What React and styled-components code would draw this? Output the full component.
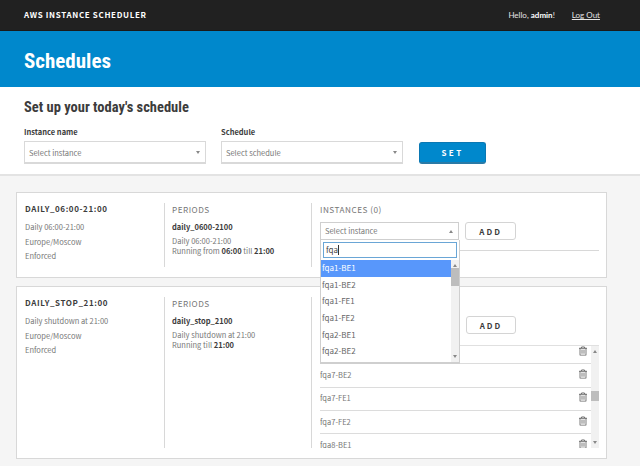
import styled, { createGlobalStyle } from 'styled-components';
import { FaRegTrashAlt } from 'react-icons/fa';

const SANS = '"Noto Sans CJK SC", "Noto Sans", sans-serif';

const GlobalStyle = createGlobalStyle`
  html, body {
    margin: 0;
    height: 466px;
    overflow: hidden;
    background: #f5f5f5;
    font-family: ${SANS};
    color: #666;
  }
  * { box-sizing: border-box; }
`;

const TopBar = styled.header`
  height: 31px;
  background: #212121;
  border-bottom: 1px solid #1a1a1a;
  padding: 0 40px 0 24px;
  display: flex;
  align-items: center;
  justify-content: space-between;
  color: #fff;
`;

const Brand = styled.div`
  font-size: 8px;
  line-height: 12px;
  font-weight: 700;
  letter-spacing: 0.65px;
`;

const UserBox = styled.div`
  display: flex;
  gap: 17px;
  font-family: Lato, sans-serif;
  font-size: 8px;
  line-height: 12px;
  color: #e4e4e4;
  b { color: #fff; }
  a { color: #e4e4e4; text-decoration: underline; }
`;

const Banner = styled.div`
  height: 56px;
  background: #0088cc;
  padding: 3px 0 0 24px;
  display: flex;
  align-items: center;
`;

const PageTitle = styled.h1`
  margin: 0;
  font-family: Roboto, sans-serif;
  font-stretch: 75%;
  font-size: 21px;
  line-height: 28px;
  font-weight: 700;
  color: #fff;
`;

const SetupForm = styled.section`
  height: 89px;
  background: #fff;
  border-bottom: 2px solid #e3e3e3;
  padding: 11px 0 0 24px;
`;

const FormTitle = styled.h2`
  margin: 0 0 8px;
  font-family: Roboto, sans-serif;
  font-stretch: 75%;
  font-size: 14.5px;
  line-height: 20px;
  font-weight: 700;
  color: #3c3c3c;
`;

const FormRow = styled.div`
  display: flex;
  align-items: flex-end;
`;

const Field = styled.div`
  width: 182px;
  margin-right: ${(p) => p.$gap}px;
`;

const FieldLabel = styled.div`
  font-size: 7.5px;
  line-height: 12px;
  font-weight: 700;
  color: #3c3c3c;
  margin-bottom: 3px;
`;

const Select = styled.div`
  width: ${(p) => p.$width || '100%'};
  height: ${(p) => p.$height || 23}px;
  background: #fff;
  border: 1px solid ${(p) => p.$border || '#d9d9d9'};
  border-bottom-width: ${(p) => (p.$flat ? 1 : 2)}px;
  padding: 0 5px 0 4px;
  display: flex;
  align-items: center;
  justify-content: space-between;
  font-size: 7.5px;
  color: #777;
`;

const Caret = styled.span`
  width: 0;
  height: 0;
  border-left: 2.5px solid transparent;
  border-right: 2.5px solid transparent;
  border-${(p) => (p.$up ? 'bottom' : 'top')}: 3px solid #888;
`;

const SetButton = styled.button`
  width: 67px;
  height: 22px;
  background: #0088cc;
  border: 1px solid #0a78b3;
  border-bottom: 2px solid #2a7aa6;
  border-radius: 3px;
  color: #fff;
  font-family: ${SANS};
  font-size: 8px;
  font-weight: 700;
  letter-spacing: 2.4px;
  padding: 0;
`;

const Cards = styled.main`
  padding: 16px 33px 0 16px;
  display: flex;
  flex-direction: column;
  gap: 8px;
`;

const Card = styled.article`
  height: ${(p) => p.$height}px;
  background: #fff;
  border: 1px solid #d8d8d8;
  padding: 10px 0;
  display: grid;
  grid-template-columns: 148px 147px 1fr;
`;

const Column = styled.div`
  padding-left: ${(p) => p.$left}px;
  border-right: ${(p) => (p.$last ? 0 : '1px solid #d8d8d8')};
  min-width: 0;
  font-size: 7.5px;
  line-height: 14.5px;
  color: #777;
  position: relative;
`;

const ScheduleName = styled.div`
  font-size: 8px;
  line-height: 12px;
  font-weight: 700;
  letter-spacing: 0.6px;
  color: #3c3c3c;
  margin-bottom: 5px;
`;

const ColumnHead = styled.div`
  font-size: 8.2px;
  line-height: 12px;
  letter-spacing: 0.5px;
  color: #777;
  margin-bottom: 7px;
`;

const PeriodName = styled.div`
  font-weight: 700;
  color: #3c3c3c;
  margin: -2px 0 1px;
`;

const PeriodText = styled.div`
  line-height: 10.5px;
  b { color: #3c3c3c; }
`;

const PickerRow = styled.div`
  display: flex;
  gap: 6px;
  padding-right: 90px;
`;

const AddButton = styled.button`
  width: 51px;
  height: 18px;
  background: #fff;
  border: 1px solid #d4d4d4;
  border-radius: 3px;
  color: #3c3c3c;
  font-family: ${SANS};
  font-size: 8px;
  font-weight: 700;
  letter-spacing: 2px;
  padding: 0;
`;

const PickerSpacer = styled.div`
  width: 140px;
  flex: none;
`;

const Rule = styled.div`
  height: 1px;
  background: #d8d8d8;
  margin: 10px 7px 0 0;
`;

const Dropdown = styled.div`
  position: absolute;
  z-index: 5;
  left: 8px;
  top: 37px;
  width: 140px;
  background: #fff;
  border: 1px solid #cfcfcf;
  border-top: 0;
  border-bottom-width: 2px;
`;

const SearchBox = styled.div`
  height: 16px;
  margin: 2px;
  border: 1px solid #6aa6d6;
  padding-left: 2px;
  font-size: 8px;
  line-height: 14px;
  color: #444;
  &::after {
    content: '';
    display: inline-block;
    width: 1px;
    height: 10px;
    background: #333;
    vertical-align: -2px;
  }
`;

const OptionsWrap = styled.div`
  display: flex;
  height: 102px;
`;

const Options = styled.ul`
  flex: 1;
  margin: 0;
  padding: 0;
  list-style: none;
`;

const Option = styled.li`
  height: 16.7px;
  line-height: 16.7px;
  padding-left: 1px;
  font-size: 8px;
  color: ${(p) => (p.$active ? '#fff' : '#666')};
  background: ${(p) => (p.$active ? '#5897fb' : 'transparent')};
`;

const Scrollbar = styled.div`
  width: 8px;
  flex: none;
  background: #f1f1f1;
  display: flex;
  flex-direction: column;
  align-items: center;
  justify-content: space-between;
  padding: 4px 0;
  position: relative;
`;

const Thumb = styled.div`
  position: absolute;
  left: 0;
  top: ${(p) => p.$top}px;
  width: 8px;
  height: ${(p) => p.$height}px;
  background: #bdbdbd;
`;

const InstanceList = styled.div`
  position: absolute;
  left: 8px;
  top: 48px;
  width: 279px;
  height: 103px;
  display: flex;
  overflow: hidden;
  border-top: 1px solid #e0e0e0;
`;

const Rows = styled.div`
  flex: 1;
  min-width: 0;
  margin-top: -5px;
`;

const Row = styled.div`
  height: 23.3px;
  border-bottom: 1px solid #dcdcdc;
  display: flex;
  align-items: center;
  justify-content: space-between;
  padding-right: 4px;
  color: #777;
  svg {
    width: 8px;
    height: 10px;
    margin-bottom: 3px;
    color: #666;
  }
`;

const options = ['fqa1-BE1', 'fqa1-BE2', 'fqa1-FE1', 'fqa1-FE2', 'fqa2-BE1', 'fqa2-BE2'];
const instances = ['fqa7-BE1', 'fqa7-BE2', 'fqa7-FE1', 'fqa7-FE2', 'fqa8-BE1'];

export default function App() {
  return (
    <>
      <GlobalStyle />
      <TopBar>
        <Brand>AWS INSTANCE SCHEDULER</Brand>
        <UserBox>
          <span>Hello, <b>admin</b>!</span>
          <a href="#logout">Log Out</a>
        </UserBox>
      </TopBar>
      <Banner>
        <PageTitle>Schedules</PageTitle>
      </Banner>
      <SetupForm>
        <FormTitle>Set up your today's schedule</FormTitle>
        <FormRow>
          <Field $gap={15}>
            <FieldLabel>Instance name</FieldLabel>
            <Select>Select instance<Caret /></Select>
          </Field>
          <Field $gap={16}>
            <FieldLabel>Schedule</FieldLabel>
            <Select>Select schedule<Caret /></Select>
          </Field>
          <SetButton>SET</SetButton>
        </FormRow>
      </SetupForm>
      <Cards>
        <Card $height={86}>
          <Column $left={8}>
            <ScheduleName>DAILY_06:00-21:00</ScheduleName>
            <div>Daily 06:00-21:00</div>
            <div>Europe/Moscow</div>
            <div>Enforced</div>
          </Column>
          <Column $left={7}>
            <ColumnHead>PERIODS</ColumnHead>
            <PeriodName>daily_0600-2100</PeriodName>
            <PeriodText>Daily 06:00-21:00</PeriodText>
            <PeriodText>Running from <b>06:00</b> till <b>21:00</b></PeriodText>
          </Column>
          <Column $left={8} $last>
            <ColumnHead>INSTANCES (0)</ColumnHead>
            <PickerRow>
              <Select $height={18} $width="140px" $border="#cfcfcf" $flat>
                Select instance<Caret $up />
              </Select>
              <AddButton>ADD</AddButton>
            </PickerRow>
            <Rule />
            <Dropdown>
              <SearchBox>fqa</SearchBox>
              <OptionsWrap>
                <Options>
                  {options.map((name, i) => (
                    <Option key={name} $active={i === 0}>{name}</Option>
                  ))}
                </Options>
                <Scrollbar>
                  <Caret $up />
                  <Thumb $top={8} $height={18} />
                  <Caret />
                </Scrollbar>
              </OptionsWrap>
            </Dropdown>
          </Column>
        </Card>
        <Card $height={173}>
          <Column $left={8}>
            <ScheduleName>DAILY_STOP_21:00</ScheduleName>
            <div>Daily shutdown at 21:00</div>
            <div>Europe/Moscow</div>
            <div>Enforced</div>
          </Column>
          <Column $left={7}>
            <ColumnHead>PERIODS</ColumnHead>
            <PeriodName>daily_stop_2100</PeriodName>
            <PeriodText>Daily shutdown at 21:00</PeriodText>
            <PeriodText>Running till <b>21:00</b></PeriodText>
          </Column>
          <Column $left={8} $last>
            <ColumnHead>&nbsp;</ColumnHead>
            <PickerRow>
              <PickerSpacer />
              <AddButton>ADD</AddButton>
            </PickerRow>
            <InstanceList>
              <Rows>
                {instances.map((name) => (
                  <Row key={name}>
                    {name}
                    <FaRegTrashAlt />
                  </Row>
                ))}
              </Rows>
              <Scrollbar>
                <Caret $up />
                <Thumb $top={45} $height={10} />
                <Caret />
              </Scrollbar>
            </InstanceList>
          </Column>
        </Card>
      </Cards>
    </>
  );
}
